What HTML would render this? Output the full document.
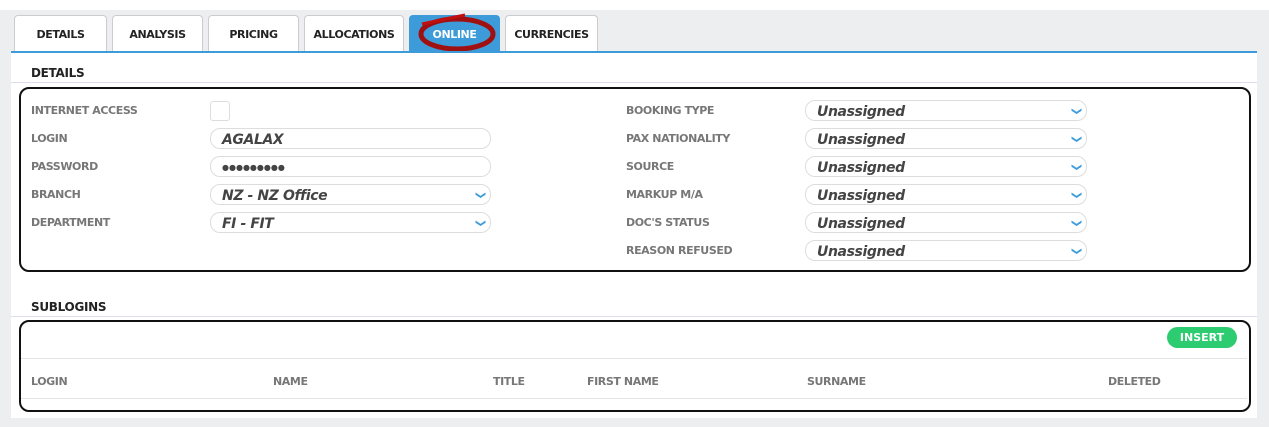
<!DOCTYPE html><html><head><style>
body{margin:0;width:1269px;height:427px;background:#fff;font-family:"DejaVu Sans","Liberation Sans",sans-serif;position:relative;overflow:hidden}
.bg{position:absolute;left:0;top:10px;width:1269px;height:417px;background:#eceeef}
.panel{position:absolute;left:11px;top:52px;width:1246px;height:366px;background:#fff}
.tab{position:absolute;top:15px;height:36px;background:#fff;border:1px solid #ccc;border-bottom:none;border-radius:4px 4px 0 0;font-size:11px;font-weight:bold;color:#222;text-align:center;line-height:37px;letter-spacing:-.4px}
.blue{position:absolute;left:11px;top:51px;width:1246px;height:2px;background:#3d9bd9}
.h{position:absolute;font-size:12px;font-weight:bold;color:#222;letter-spacing:-.3px}
.hl{position:absolute;left:11px;width:1246px;height:1px;background:#dde}
.box{position:absolute;border:2px solid #111;border-radius:10px}
.lb{position:absolute;font-size:11px;font-weight:bold;color:#777;letter-spacing:-.4px}
.in{position:absolute;border:1px solid #ddd;border-radius:10px;font-size:14px;font-weight:bold;font-style:italic;color:#444;line-height:22px;padding-left:11px;box-sizing:border-box;height:21px;letter-spacing:-.4px}
.in .c{position:absolute;right:6px;top:-1px;color:#3d9bd9;font-style:normal;font-size:10px;transform:rotate(90deg)}
</style></head><body>
<div class="bg"></div><div class="panel"></div>
<div class="tab" style="left:14px;width:91px">DETAILS</div>
<div class="tab" style="left:112px;width:89px">ANALYSIS</div>
<div class="tab" style="left:208px;width:89px">PRICING</div>
<div class="tab" style="left:304px;width:98px">ALLOCATIONS</div>
<div class="tab" style="left:409px;width:89px;background:#3d9bd9;border-color:#3d9bd9;color:#fff">ONLINE</div>
<div class="tab" style="left:505px;width:91px">CURRENCIES</div>
<svg style="position:absolute;left:410px;top:10px" width="95" height="50"><ellipse cx="47" cy="24" rx="36" ry="15" fill="none" stroke="#a01010" stroke-width="5"/><path d="M12 14 L40 8 L55 5" stroke="#c01010" stroke-width="3" fill="none"/></svg>
<div class="blue"></div>
<div class="h" style="left:31px;top:66px">DETAILS</div><div class="hl" style="top:82px"></div>
<div class="box" style="left:19px;top:87px;width:1228px;height:181px"></div>
<div class="lb" style="left:31px;top:104px">INTERNET ACCESS</div>
<div style="position:absolute;left:210px;top:101px;width:18px;height:18px;border:1px solid #ddd;border-radius:3px"></div>
<div class="lb" style="left:31px;top:132px">LOGIN</div><div class="in" style="left:210px;top:128px;width:281px">AGALAX</div>
<div class="lb" style="left:31px;top:160px">PASSWORD</div><div class="in" style="left:210px;top:156px;width:281px;font-style:normal;font-size:8px;letter-spacing:0">●●●●●●●●●</div>
<div class="lb" style="left:31px;top:188px">BRANCH</div><div class="in" style="left:210px;top:184px;width:281px">NZ - NZ Office<span class="c">❯</span></div>
<div class="lb" style="left:31px;top:216px">DEPARTMENT</div><div class="in" style="left:210px;top:212px;width:281px">FI - FIT<span class="c">❯</span></div>
<div class="lb" style="left:626px;top:104px">BOOKING TYPE</div><div class="in" style="left:805px;top:100px;width:282px">Unassigned<span class="c">❯</span></div>
<div class="lb" style="left:626px;top:132px">PAX NATIONALITY</div><div class="in" style="left:805px;top:128px;width:282px">Unassigned<span class="c">❯</span></div>
<div class="lb" style="left:626px;top:160px">SOURCE</div><div class="in" style="left:805px;top:156px;width:282px">Unassigned<span class="c">❯</span></div>
<div class="lb" style="left:626px;top:188px">MARKUP M/A</div><div class="in" style="left:805px;top:184px;width:282px">Unassigned<span class="c">❯</span></div>
<div class="lb" style="left:626px;top:216px">DOC'S STATUS</div><div class="in" style="left:805px;top:212px;width:282px">Unassigned<span class="c">❯</span></div>
<div class="lb" style="left:626px;top:244px">REASON REFUSED</div><div class="in" style="left:805px;top:240px;width:282px">Unassigned<span class="c">❯</span></div>
<div class="h" style="left:31px;top:300px">SUBLOGINS</div><div class="hl" style="top:316px"></div>
<div class="box" style="left:19px;top:320px;width:1228px;height:88px"></div>
<div style="position:absolute;left:1167px;top:327px;width:70px;height:21px;background:#2ecc71;border-radius:11px;color:#fff;font-size:11px;font-weight:bold;text-align:center;line-height:21px">INSERT</div>
<div style="position:absolute;left:21px;top:358px;width:1226px;height:1px;background:#e4e4e4"></div>
<div style="position:absolute;left:21px;top:398px;width:1226px;height:1px;background:#e4e4e4"></div>
<div class="lb" style="left:31px;top:375px">LOGIN</div>
<div class="lb" style="left:273px;top:375px">NAME</div>
<div class="lb" style="left:493px;top:375px">TITLE</div>
<div class="lb" style="left:587px;top:375px">FIRST NAME</div>
<div class="lb" style="left:807px;top:375px">SURNAME</div>
<div class="lb" style="left:1108px;top:375px">DELETED</div>
</body></html>
